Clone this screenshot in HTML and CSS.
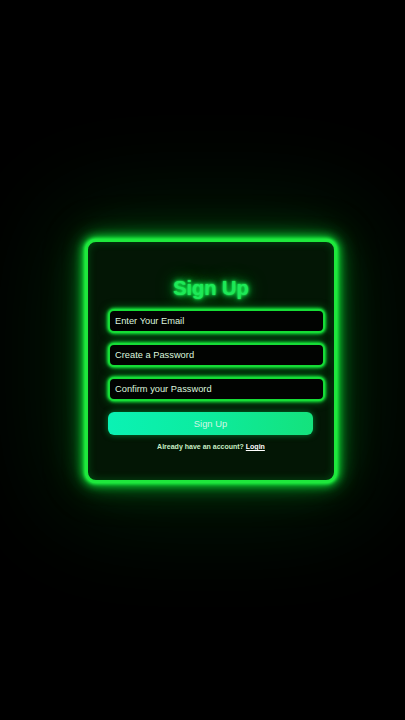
FILE: index.html
```html
<!DOCTYPE html>
<html lang="en">
<head>
<meta charset="utf-8">
<title>Sign Up</title>
<link rel="stylesheet" href="styles.css">
</head>
<body>
<main class="stage">
  <form class="card">
    <h1 class="title">Sign Up</h1>
    <input class="field" type="email" placeholder="Enter Your Email">
    <input class="field" type="password" placeholder="Create a Password">
    <input class="field" type="password" placeholder="Confirm your Password">
    <button class="btn" type="button">Sign Up</button>
    <p class="note">Already have an account? <a class="login" href="#">Login</a></p>
  </form>
</main>
</body>
</html>
```
FILE: styles.css
```css
html, body {
  margin: 0;
  padding: 0;
  background: #000;
  height: 100%;
}
body {
  font-family: "Liberation Sans", Arial, sans-serif;
}
.stage {
  height: 720px;
  display: flex;
  align-items: center;
  justify-content: flex-start;
  padding-left: 85px;
  box-sizing: border-box;
}
.card {
  box-sizing: border-box;
  width: 252px;
  height: 244px;
  margin-top: 2px;
  border: 3px solid #1ee83c;
  border-radius: 11px;
  background: #031605;
  padding: 34px 20px 0 20px;
  display: flex;
  flex-direction: column;
  align-items: flex-start;
  box-shadow:
    0 0 3px 1px #20f040,
    0 0 8px 2px #10d835,
    0 0 18px 2px rgba(0, 210, 45, 0.6),
    0 0 40px rgba(0, 160, 35, 0.45),
    0 0 110px 30px rgba(0, 80, 20, 0.35),
    inset 0 0 8px rgba(0, 200, 50, 0.3);
}
.title {
  margin: 0;
  align-self: center;
  font-size: 20px;
  line-height: 24px;
  font-weight: bold;
  color: #1ee858;
  text-shadow:
    0 0 2px #20ff58,
    0 0 5px #14ec4c,
    0 0 10px #0ecc3c,
    0 0 18px #0a9a2a;
  margin-bottom: 9px;
}
.field {
  box-sizing: border-box;
  width: 217px;
  height: 24px;
  margin: 0 0 10px 0;
  padding: 0 0 0 5px;
  border: 2px solid #16dc36;
  border-radius: 6px;
  background: #010301;
  color: #dcf5de;
  font-family: "Liberation Sans", Arial, sans-serif;
  font-size: 9.3px;
  outline: none;
  box-shadow:
    0 0 3px 1px #14e43a,
    0 0 10px rgba(0, 210, 45, 0.6);
}
.field::placeholder {
  color: #dcf5de;
  opacity: 1;
}
.btn {
  box-sizing: border-box;
  width: 205px;
  height: 23px;
  margin-top: 1px;
  border: none;
  border-radius: 6px;
  background: linear-gradient(90deg, #0af2b4 0%, #0ceca0 45%, #14e27c 100%);
  color: #d2f6e4;
  font-family: "Liberation Sans", Arial, sans-serif;
  font-size: 9.4px;
  box-shadow: 0 0 6px rgba(0, 230, 90, 0.5);
}
.note {
  margin: 7px 0 0 0;
  align-self: center;
  font-size: 7px;
  line-height: 10px;
  font-weight: bold;
  color: #c8eec4;
}
.login {
  color: #ffffff;
  text-decoration: underline;
}
```
